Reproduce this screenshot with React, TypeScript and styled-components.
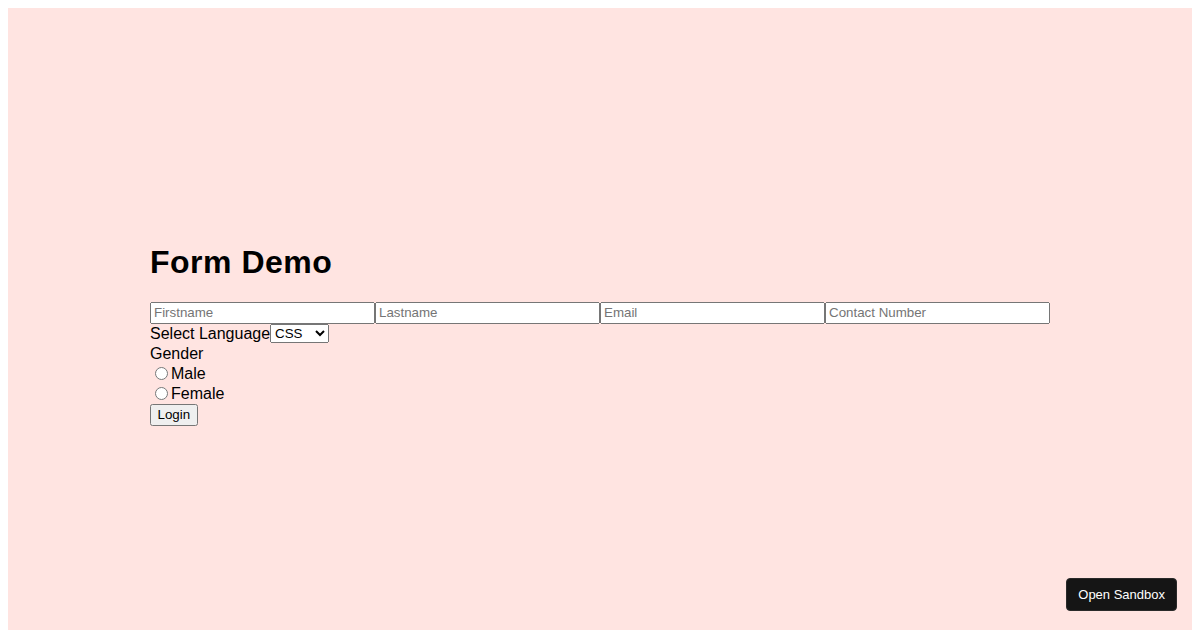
import React, { useState } from "react";
import styled, { createGlobalStyle } from "styled-components";

const GlobalStyle = createGlobalStyle`
  body {
    margin: 8px;
    font-family: Helvetica, "Liberation Sans", Arial, sans-serif;
    font-size: 16px;
    color: #000;
  }
`;

const languages = ["CSS", "HTML", "JavaScript", "React"];

export default function App() {
  const [form, setForm] = useState({
    firstName: "",
    lastName: "",
    email: "",
    contact: "",
    language: "CSS",
    gender: "",
  });

  const handleChange = (e: any) =>
    setForm({ ...form, [e.target.name]: e.target.value });

  return (
    <Page>
      <GlobalStyle />
      <Container>
        <Title>Form Demo</Title>
        <Form onSubmit={(e) => e.preventDefault()}>
          <InputRow>
            <Input
              type="text"
              name="firstName"
              placeholder="Firstname"
              onChange={handleChange}
            />
            <Input
              type="text"
              name="lastName"
              placeholder="Lastname"
              onChange={handleChange}
            />
            <Input
              type="email"
              name="email"
              placeholder="Email"
              onChange={handleChange}
            />
            <Input
              type="text"
              name="contact"
              placeholder="Contact Number"
              onChange={handleChange}
            />
          </InputRow>
          <Line>
            Select Language
            <Select
              name="language"
              value={form.language}
              onChange={handleChange}
            >
              {languages.map((l) => (
                <option key={l} value={l}>
                  {l}
                </option>
              ))}
            </Select>
          </Line>
          <Line>Gender</Line>
          <RadioLabel>
            <Radio
              type="radio"
              name="gender"
              value="male"
              onChange={handleChange}
            />
            Male
          </RadioLabel>
          <RadioLabel>
            <Radio
              type="radio"
              name="gender"
              value="female"
              onChange={handleChange}
            />
            Female
          </RadioLabel>
          <SubmitButton type="submit">Login</SubmitButton>
        </Form>
      </Container>
      <SandboxButton>Open Sandbox</SandboxButton>
    </Page>
  );
}

const Page = styled.div`
  box-sizing: border-box;
  min-height: 100vh;
  padding-top: 2px;
  background-color: mistyrose;
  display: flex;
  align-items: center;
  justify-content: center;
`;

const Container = styled.div`
  width: 900px;
`;

const Title = styled.h1`
  font-size: 2em;
  font-weight: 700;
  letter-spacing: 0.5px;
  margin: 0.67em 0;
`;

const Form = styled.form`
  display: flex;
  flex-direction: column;
  align-items: flex-start;
`;

const InputRow = styled.div`
  display: flex;
  width: 100%;
`;

const Input = styled.input`
  box-sizing: border-box;
  width: 25%;
  height: 22px;
  margin: 0;
  font-family: Helvetica, "Liberation Sans", Arial, sans-serif;
  font-size: 13.333px;
`;

const Line = styled.div`
  display: flex;
  align-items: center;
  line-height: 20px;
`;

const Select = styled.select`
  font-family: Helvetica, "Liberation Sans", Arial, sans-serif;
  font-size: 13.333px;
  width: 59px;
  margin: 0;
`;

const RadioLabel = styled.label`
  display: flex;
  align-items: center;
  line-height: 20px;
`;

const Radio = styled.input`
  margin: 0 3px 0 5px;
`;

const SubmitButton = styled.button`
  font-family: Helvetica, "Liberation Sans", Arial, sans-serif;
  font-size: 13.333px;
  height: 22px;
  padding: 1px 5.5px;
  margin: 0;
`;

const SandboxButton = styled.button`
  position: fixed;
  right: 23px;
  bottom: 19px;
  background: #151515;
  color: #fff;
  border: 1px solid #2a2a2a;
  border-radius: 4px;
  padding: 0 11px;
  height: 33px;
  font-family: Helvetica, "Liberation Sans", Arial, sans-serif;
  font-size: 13px;
  cursor: pointer;
`;
